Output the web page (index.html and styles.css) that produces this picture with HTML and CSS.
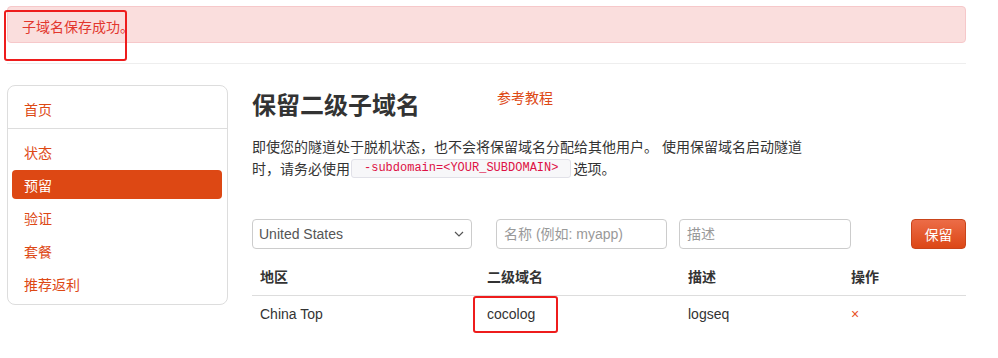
FILE: index.html
```html
<!DOCTYPE html>
<html lang="zh-CN">
<head>
<meta charset="utf-8">
<title>保留二级子域名</title>
<link rel="stylesheet" href="styles.css">
</head>
<body>
<div class="page">
  <div class="alert">子域名保存成功。</div>
  <hr class="rule">
  <div class="layout">
    <nav class="sidebar">
      <a class="nav-item" href="#">首页</a>
      <div class="nav-divider"></div>
      <a class="nav-item" href="#">状态</a>
      <a class="nav-item active" href="#">预留</a>
      <a class="nav-item" href="#">验证</a>
      <a class="nav-item" href="#">套餐</a>
      <a class="nav-item" href="#">推荐返利</a>
    </nav>
    <main class="main">
      <div class="title-row">
        <h2 class="title">保留二级子域名</h2>
        <a class="tutorial" href="#">参考教程</a>
      </div>
      <p class="desc"><span>即使您的隧道处于脱机状态，也不会将保留域名分配给其他用户。 使用保留域名启动隧道时，请务必使用</span><code class="code">-subdomain=&lt;YOUR_SUBDOMAIN&gt;</code><span>选项。</span></p>
      <form class="form-row">
        <div class="select-wrap">
          <select class="select">
            <option>United States</option>
            <option>China Top</option>
          </select>
          <svg class="chevron" width="10" height="6" viewBox="0 0 10 6"><path d="M1 1 L5 5 L9 1" fill="none" stroke="#555" stroke-width="1.2"/></svg>
        </div>
        <input class="input input-name" type="text" placeholder="名称 (例如: myapp)">
        <input class="input input-desc" type="text" placeholder="描述">
        <button class="btn" type="button">保留</button>
      </form>
      <table class="table">
        <colgroup>
          <col class="c1"><col class="c2"><col class="c3"><col class="c4">
        </colgroup>
        <thead>
          <tr><th>地区</th><th>二级域名</th><th>描述</th><th>操作</th></tr>
        </thead>
        <tbody>
          <tr><td>China Top</td><td>cocolog</td><td>logseq</td><td><a class="del" href="#">×</a></td></tr>
        </tbody>
      </table>
    </main>
  </div>
</div>
<div class="mark mark-alert"></div>
<div class="mark mark-cell"></div>
</body>
</html>
```

FILE: styles.css
```css
* { box-sizing: border-box; }
body {
  margin: 0;
  font-family: "Liberation Sans", "Noto Sans CJK SC", sans-serif;
  font-size: 14px;
  line-height: 20px;
  color: #333;
  background: #fff;
}
a { text-decoration: none; }
.page {
  width: 959px;
  margin-left: 7px;
  padding-top: 6px;
}
.alert {
  background: #fadedd;
  border: 1px solid #f6c8ca;
  border-radius: 4px;
  color: #e2372e;
  padding: 10px 14px 5px;
}
.rule {
  margin: 20px 0 0;
  border: 0;
  border-top: 1px solid #eee;
  height: 0;
}
.layout {
  display: flex;
  align-items: flex-start;
  margin-top: 21px;
}
.sidebar {
  width: 221px;
  border: 1px solid #ddd;
  border-radius: 8px;
  padding: 8px 5px 6px 4px;
  display: flex;
  flex-direction: column;
  gap: 4px;
}
.nav-item {
  display: block;
  height: 29px;
  line-height: 25px;
  padding: 4px 0 0 12px;
  color: #dd4814;
  border-radius: 4px;
}
.nav-item.active {
  background: #dd4814;
  color: #fff;
}
.nav-divider {
  border-top: 1px solid #ddd;
  margin: 1px -5px 4px -4px;
}
.main {
  margin-left: 24px;
  width: 714px;
}
.title-row {
  display: flex;
  align-items: flex-start;
  margin-top: 3px;
}
.title {
  margin: 3px 0 0;
  font-size: 24px;
  line-height: 30px;
  font-weight: bold;
  color: #333;
}
.tutorial {
  margin-left: 77px;
  color: #dd4814;
}
.desc {
  margin: 15px 0 0;
  width: 560px;
  line-height: 22px;
}
.code {
  display: inline-block;
  vertical-align: middle;
  font-family: "Liberation Mono", monospace;
  font-size: 12px;
  line-height: 17px;
  height: 19px;
  color: #dd1144;
  background: #f7f7f9;
  border: 1px solid #e1e1e8;
  border-radius: 3px;
  padding: 0 12px;
  margin: -3px 2px 0 1px;
}
.form-row {
  display: flex;
  align-items: center;
  margin: 39px 0 0;
  height: 30px;
}
.select-wrap {
  position: relative;
  width: 220px;
  height: 30px;
}
.select {
  appearance: none;
  -webkit-appearance: none;
  width: 100%;
  height: 30px;
  border: 1px solid #ccc;
  border-radius: 4px;
  background: #fff;
  padding: 0 6px;
  font-family: inherit;
  font-size: 14px;
  color: #555;
}
.chevron {
  position: absolute;
  right: 8px;
  top: 12px;
}
.input {
  height: 30px;
  border: 1px solid #ccc;
  border-radius: 4px;
  padding: 0 7px;
  font-family: inherit;
  font-size: 14px;
  color: #555;
}
.input::placeholder { color: #999; }
.input-name { margin-left: 24px; width: 171px; }
.input-desc { margin-left: 12px; width: 172px; }
.btn {
  margin-left: auto;
  width: 55px;
  height: 30px;
  border: 1px solid #c9441a;
  border-radius: 4px;
  background: linear-gradient(#ec6c47, #dc4716);
  color: #fff;
  font-family: inherit;
  font-size: 14px;
  padding: 0;
}
.table {
  margin-top: 10px;
  width: 714px;
  border-collapse: collapse;
}
.c1 { width: 227px; }
.c2 { width: 201px; }
.c3 { width: 163px; }
.table th,
.table td {
  text-align: left;
  padding: 8px;
  line-height: 20px;
}
.table th {
  font-weight: bold;
  border-bottom: 1px solid #ddd;
}
.del {
  color: #e8501f;
  font-size: 14px;
}
.mark {
  position: absolute;
  border: 2.5px solid #ee1c1c;
  border-radius: 3px;
}
.mark-alert {
  left: 4px;
  top: 10px;
  width: 123px;
  height: 51px;
}
.mark-cell {
  left: 473px;
  top: 296px;
  width: 85px;
  height: 37px;
}
```
